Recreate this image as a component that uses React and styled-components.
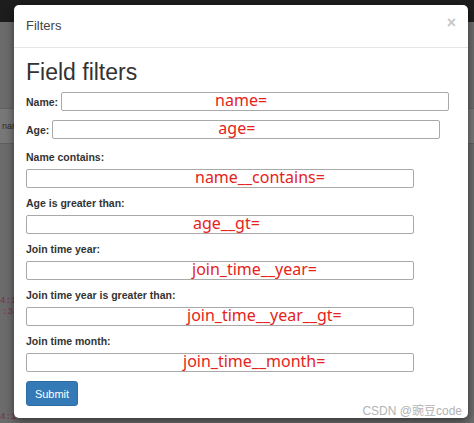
import React from "react";
import styled, { createGlobalStyle } from "styled-components";

const GlobalStyle = createGlobalStyle`
  html, body {
    margin: 0;
    padding: 0;
    width: 474px;
    height: 423px;
    overflow: hidden;
    background: #6b6b6b;
    font-family: "Liberation Sans", Arial, sans-serif;
  }
  * { box-sizing: border-box; }
`;

const Page = styled.div`
  position: relative;
  width: 474px;
  height: 423px;
  background: #6b6b6b;
  display: flex;
  flex-direction: column;
  overflow: hidden;
`;

const NavBar = styled.div`
  height: 22px;
  background: #1d1d1d;
  flex: 0 0 auto;
`;

const PageHead = styled.div`
  height: 90px;
  border-bottom: 1px solid #626262;
`;

const TableRow = styled.div`
  height: 36px;
  background: #777;
  border-bottom: 1px solid #5f5f5f;
  display: flex;
  align-items: center;
  font-size: 9px;
  color: #2a2a2a;
  padding-left: 2px;
`;

const CodeLine = styled.div`
  font-family: "Liberation Mono", monospace;
  font-size: 9px;
  color: #7b2f48;
  line-height: 11px;
  margin-top: ${(p) => p.$top || 0}px;
  padding-left: ${(p) => p.$indent || 0}px;
`;

const Modal = styled.div`
  position: absolute;
  left: 14px;
  top: 5px;
  width: 454px;
  height: 413px;
  background: #fff;
  border-radius: 5px;
  box-shadow: 0 3px 9px rgba(0, 0, 0, 0.5);
  display: flex;
  flex-direction: column;
`;

const Header = styled.div`
  height: 43px;
  padding: 0 12px;
  border-bottom: 1px solid #e5e5e5;
  display: flex;
  align-items: center;
  justify-content: space-between;
  padding-bottom: 2px;
`;

const Title = styled.div`
  font-size: 13px;
  color: #444;
`;

const Close = styled.span`
  font-size: 16px;
  font-weight: bold;
  color: #c8c8c8;
  line-height: 1;
  margin-top: -4px;
  margin-right: 0;
`;

const Body = styled.div`
  padding: 12px 12px 0;
  display: flex;
  flex-direction: column;
  align-items: flex-start;
`;

const Heading = styled.h1`
  margin: 0 0 7px;
  font-size: 23px;
  font-weight: normal;
  line-height: 25px;
  color: #333;
`;

const InlineField = styled.div`
  display: flex;
  align-items: center;
  gap: 3px;
  margin-bottom: ${(p) => p.$gap || 0}px;
`;

const StackField = styled.div`
  display: flex;
  flex-direction: column;
  margin-bottom: 9px;
`;

const Label = styled.label`
  font-size: 10.5px;
  font-weight: bold;
  color: #333;
  line-height: 12px;
  margin-bottom: ${(p) => (p.$stacked ? 6 : 0)}px;
`;

const InputBox = styled.div`
  position: relative;
  width: 388px;
  height: 19px;
  border: 1px solid #a9a9a9;
  border-radius: 2px;
  background: #fff;
`;

const Note = styled.span`
  position: absolute;
  left: ${(p) => p.$left}px;
  top: -3px;
  font-family: "Noto Sans", "Noto Sans CJK SC", sans-serif;
  font-size: 16px;
  line-height: 21px;
  color: #e5231b;
  white-space: nowrap;
`;

const SubmitButton = styled.button`
  width: 52px;
  height: 25px;
  background: #337ab7;
  border: 1px solid #2e6da4;
  border-radius: 3px;
  color: #fff;
  font-family: "Liberation Sans", Arial, sans-serif;
  font-size: 11px;
  padding: 0;
`;

const Watermark = styled.span`
  position: absolute;
  right: 6px;
  bottom: 0px;
  font-family: "Liberation Sans", "Noto Sans CJK SC", sans-serif;
  font-size: 12px;
  color: #b3b3b3;
  white-space: nowrap;
`;

const stacked = [
  { label: "Name contains:", note: "name__contains=", left: 168 },
  { label: "Age is greater than:", note: "age__gt=", left: 166 },
  { label: "Join time year:", note: "join_time__year=", left: 165 },
  { label: "Join time year is greater than:", note: "join_time__year__gt=", left: 160 },
  { label: "Join time month:", note: "join_time__month=", left: 156 },
];

export default function App() {
  return (
    <Page>
      <GlobalStyle />
      <NavBar />
      <PageHead />
      <TableRow>nam</TableRow>
      <CodeLine $top={152}>4:1</CodeLine>
      <CodeLine $indent={2}>:34</CodeLine>
      <CodeLine $top={94}>4:1</CodeLine>

      <Modal>
        <Header>
          <Title>Filters</Title>
          <Close>×</Close>
        </Header>
        <Body>
          <Heading>Field filters</Heading>
          <InlineField $gap={9}>
            <Label>Name:</Label>
            <InputBox>
              <Note $left={153}>name=</Note>
            </InputBox>
          </InlineField>
          <InlineField $gap={12}>
            <Label>Age:</Label>
            <InputBox>
              <Note $left={165}>age=</Note>
            </InputBox>
          </InlineField>
          {stacked.map((f) => (
            <StackField key={f.label}>
              <Label $stacked>{f.label}</Label>
              <InputBox>
                <Note $left={f.left}>{f.note}</Note>
              </InputBox>
            </StackField>
          ))}
          <SubmitButton>Submit</SubmitButton>
        </Body>
        <Watermark>CSDN @豌豆code</Watermark>
      </Modal>
    </Page>
  );
}
